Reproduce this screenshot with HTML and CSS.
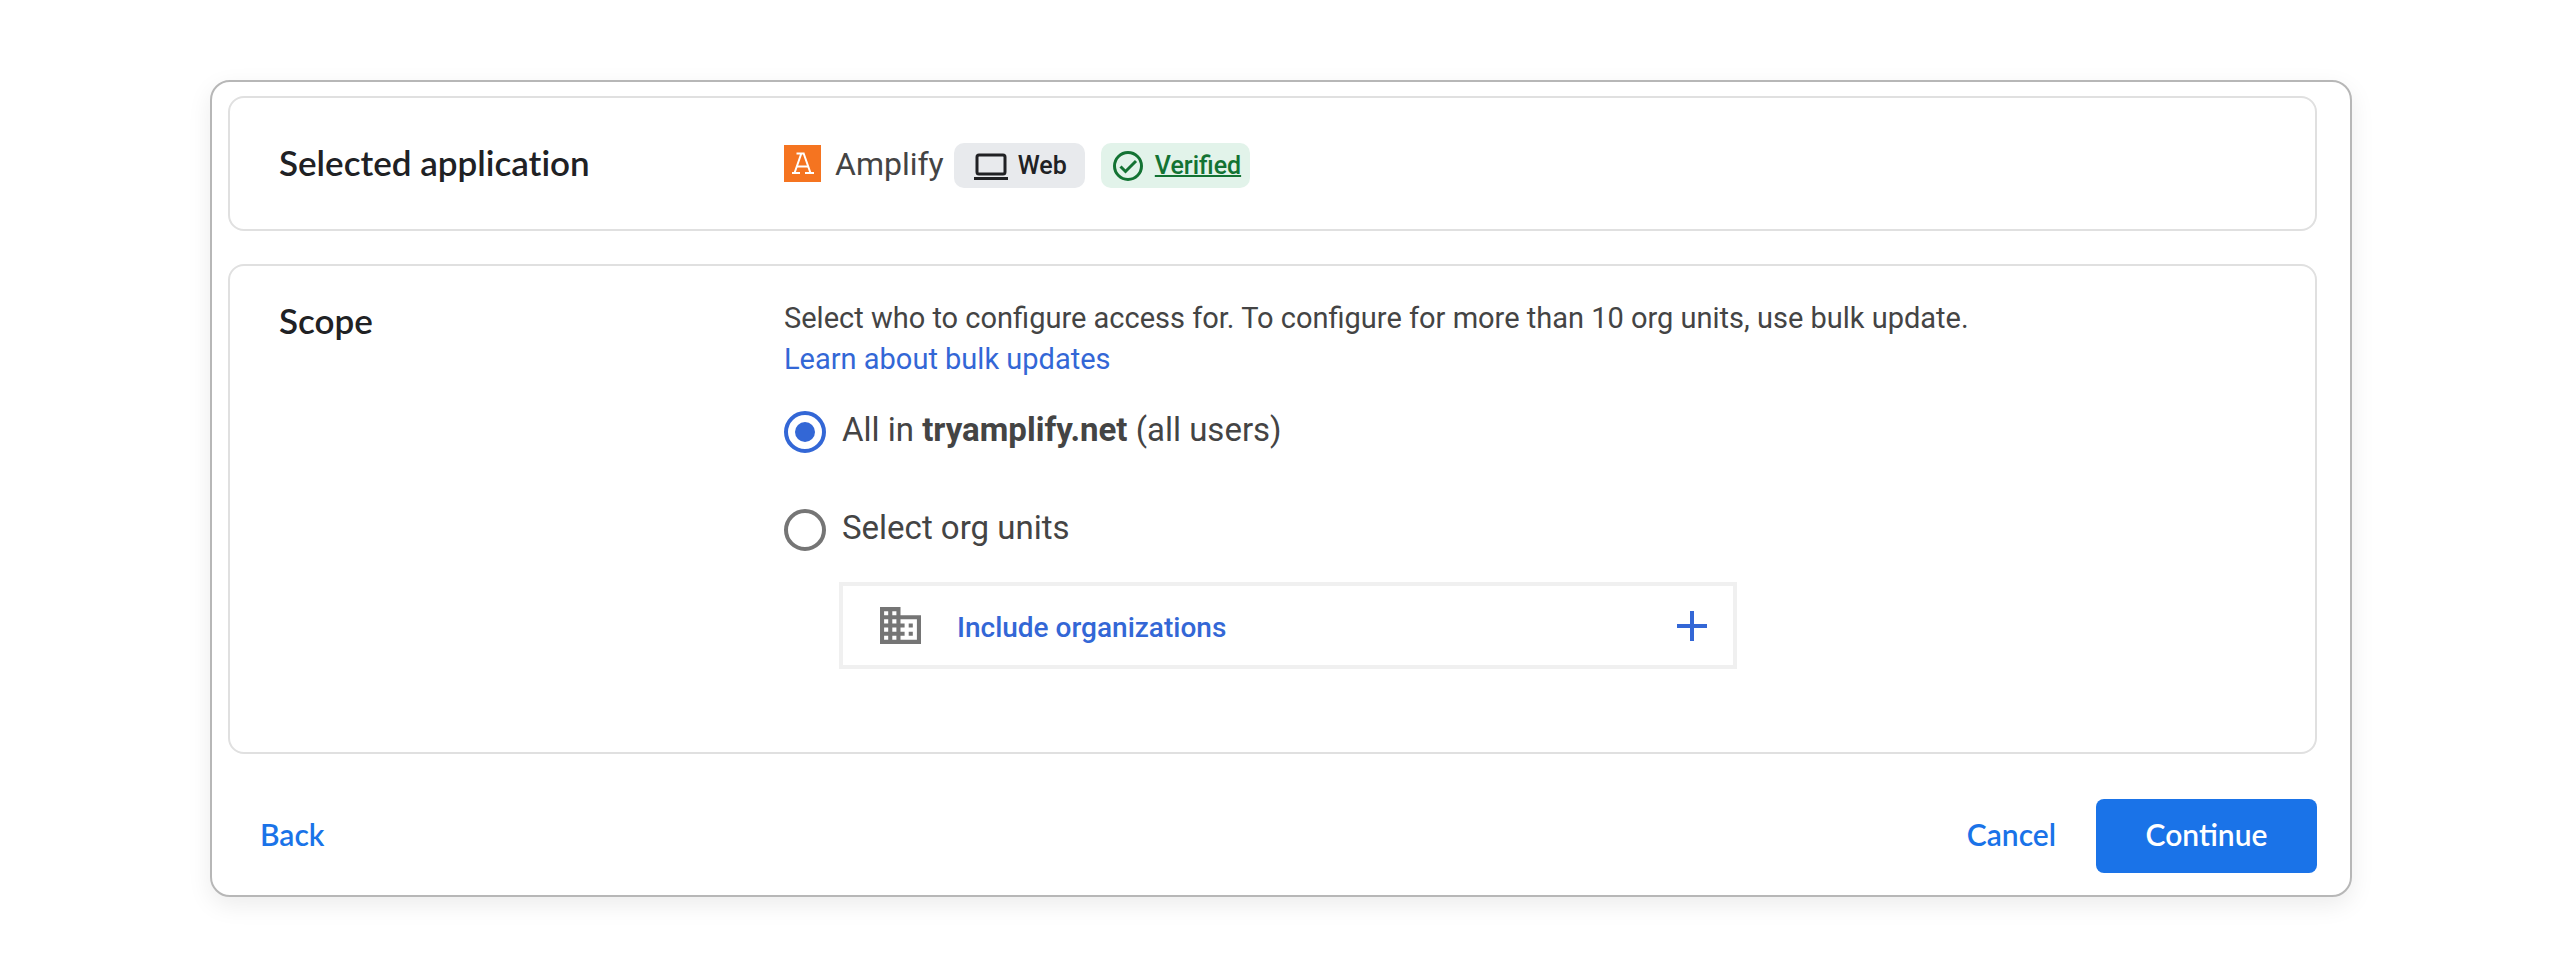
FILE: index.html
```html
<!DOCTYPE html>
<html lang="en">
  <head>
    <meta charset="UTF-8" />
    <meta name="viewport" content="width=device-width, initial-scale=1.0" />
    <title>Configure access</title>
    <link rel="stylesheet" href="styles.css">
  </head>

  <body>
    <form class="wizard">
      <!-- Selected application -->
      <section class="card card--app">
        <h2 class="card__title">Selected application</h2>
        <div class="app">
          <svg class="app__logo" viewBox="0 0 37 37" aria-hidden="true">
            <rect width="37" height="37" fill="#f57420" />
            <g fill="none" stroke="#fff" stroke-width="2">
              <path d="M12.500 8.500h8M17.500 8l-7 20M19.500 8l7 20" />
              <path d="M13 21.500h11M8 28h8M21 28h9" />
            </g>
          </svg>
          <span class="app__name">Amplify</span>
          <span class="chip">
            <svg class="chip__icon chip__icon--web" viewBox="0 0 34 28" aria-hidden="true">
              <rect x="3" y="3" width="28" height="19" rx="2" fill="none" stroke="#202124" stroke-width="3" />
              <rect x="0" y="25" width="34" height="3" fill="#202124" />
            </svg>
            Web
          </span>
          <span class="chip chip--verified">
            <svg class="chip__icon" viewBox="0 0 30 30" fill="none" stroke="#137333" stroke-width="3" aria-hidden="true">
              <circle cx="15" cy="15" r="13.5" />
              <path d="M7.500 15.500l5 5L23 10" />
            </svg>
            <a href="#verified">Verified</a>
          </span>
        </div>
      </section>

      <!-- Scope -->
      <section class="card card--scope">
        <h2 class="card__title">Scope</h2>
        <div class="scope">
          <p class="scope__hint">
            Select who to configure access for. To configure for more than 10 org units, use bulk update.<br />
            <a href="#bulk">Learn about bulk updates</a>
          </p>
          <div class="option">
            <input type="radio" id="scope-all" name="scope" value="all" checked />
            <label for="scope-all">All in <b>tryamplify.net</b> (all users)</label>
          </div>
          <div class="option">
            <input type="radio" id="scope-units" name="scope" value="units" />
            <label for="scope-units">Select org units</label>
          </div>
          <button type="button" class="include">
            <svg class="include__icon" viewBox="2 3 20 18" aria-hidden="true">
              <path fill="#757575" d="M12 7V3H2v18h20V7H12zM6 19H4v-2h2v2zm0-4H4v-2h2v2zm0-4H4V9h2v2zm0-4H4V5h2v2zm4 12H8v-2h2v2zm0-4H8v-2h2v2zm0-4H8V9h2v2zm0-4H8V5h2v2zm10 12h-8v-2h2v-2h-2v-2h2v-2h-2V9h8v10zm-2-8h-2v2h2v-2zm0 4h-2v2h2v-2z" />
            </svg>
            <span class="include__label">Include organizations</span>
            <svg class="include__plus" viewBox="0 0 30 30" aria-hidden="true">
              <path d="M15 0v30M0 15h30" stroke="#3367d6" stroke-width="4" />
            </svg>
          </button>
        </div>
      </section>

      <div class="actions">
        <button type="button" class="btn">Back</button>
        <button type="button" class="btn btn--cancel">Cancel</button>
        <button type="submit" class="btn btn--primary">Continue</button>
      </div>
    </form>
  </body>
</html>
```

FILE: styles.css
```css
* {
  box-sizing: border-box;
}

body {
  margin: 0;
  padding: 80px 208px 80px 210px;
  background: #fff;
  color: #444;
  font-family: Roboto, "Liberation Sans", sans-serif;
  font-size: 28px;
}

a {
  color: #3367d6;
  text-decoration: none;
}

.wizard {
  padding: 14px 33px 22px 16px;
  border: 2px solid #b7b7b7;
  border-radius: 20px;
  background: #fff;
  box-shadow: 0 8px 24px rgba(0, 0, 0, 0.08);
}

/* Cards */
.card {
  display: grid;
  grid-template-columns: 505px 1fr;
  padding: 0 49px;
  border: 2px solid #e0e0e0;
  border-radius: 16px;
}

.card--app {
  align-items: center;
  min-height: 135px;
  margin-bottom: 33px;
}

.card--scope {
  padding-top: 32px;
  padding-bottom: 83px;
}

.card__title {
  margin: 0;
  color: #202124;
  font-family: Lato, "Liberation Sans", sans-serif;
  font-size: 35px;
  font-weight: 600;
  font-variant-ligatures: none;
  line-height: 44px;
}

.card--app .card__title {
  margin-bottom: 4px;
}

/* Application row */
.app {
  display: flex;
  align-items: center;
}

.app__logo {
  width: 37px;
  height: 37px;
  margin-right: 14px;
}

.app__name {
  margin-right: 10px;
  font-size: 32px;
}

.chip {
  display: flex;
  align-items: center;
  gap: 10px;
  height: 45px;
  margin-top: 4px;
  margin-right: 16px;
  padding: 0 18px 0 20px;
  border-radius: 10px;
  background: #e8eaed;
  color: #202124;
  font-size: 25px;
  font-weight: 500;
}

.chip--verified {
  gap: 12px;
  padding: 0 9px 0 12px;
  background: #e2f3ea;
}

.chip--verified a {
  color: #137333;
  text-decoration: underline;
  text-decoration-thickness: 2px;
}

.chip__icon {
  width: 30px;
  height: 30px;
}

.chip__icon--web {
  width: 34px;
  height: 28px;
}

/* Scope */
.scope__hint {
  margin: 0 0 31px;
  font-size: 29px;
  line-height: 41px;
}

.option {
  display: flex;
  align-items: center;
  gap: 16px;
  margin-bottom: 56px;
  font-size: 33px;
}

.option label {
  padding-bottom: 4px;
  line-height: 36px;
}

.option input {
  display: grid;
  place-items: center;
  width: 42px;
  height: 42px;
  margin: 0;
  border: 4px solid #757575;
  border-radius: 50%;
  appearance: none;
}

.option input:checked {
  border-color: #3367d6;
}

.option input:checked::before {
  content: "";
  width: 20px;
  height: 20px;
  border-radius: 50%;
  background: #3367d6;
}

.include {
  display: flex;
  align-items: center;
  width: 100%;
  max-width: 898px;
  height: 87px;
  margin: -25px 0 0 55px;
  padding: 0 26px 0 37px;
  border: 4px solid #f0f0f0;
  background: #fff;
  color: #3367d6;
  font: inherit;
  font-weight: 500;
  cursor: pointer;
}

.include__icon {
  width: 41px;
  height: 37px;
  margin-right: 36px;
}

.include__label {
  padding-top: 4px;
}

.include__plus {
  width: 30px;
  height: 30px;
  margin-left: auto;
}

/* Footer buttons */
.actions {
  display: flex;
  align-items: center;
  margin-top: 45px;
}

.btn {
  height: 74px;
  padding: 0 32px 4px;
  border: none;
  border-radius: 8px;
  background: none;
  color: #1a73e8;
  font-family: Lato, "Liberation Sans", sans-serif;
  font-size: 30px;
  font-weight: 600;
  cursor: pointer;
}

.btn--cancel {
  margin-left: auto;
  margin-right: 8px;
}

.btn--primary {
  min-width: 221px;
  background: #1a73e8;
  color: #fff;
}
```
